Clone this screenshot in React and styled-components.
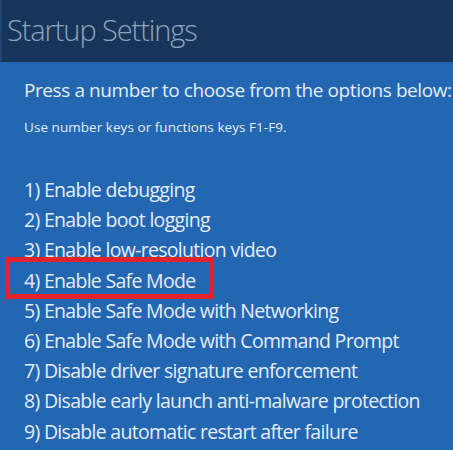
import React from 'react';
import styled, { createGlobalStyle } from 'styled-components';

const GlobalStyle = createGlobalStyle`
    html, body {
        margin: 0;
        padding: 0;
        background: #2366b2;
    }
`

//Screen holds the dark header bar and the blue options panel
const Screen = styled.div`
    width: 453px;
    height: 450px;
    overflow: hidden;
    background: #2366b2;
    font-family: "Open Sans", "Noto Sans", sans-serif;
    color: #e4edf8;
`

const Header = styled.header`
    height: 62px;
    background: #17355b;
    display: flex;
    align-items: center;
    padding-left: 7px;
    box-shadow: inset 2px 0 0 0 #1d4474;
    box-sizing: border-box;
`

const Title = styled.h1`
    margin: 0 0 4px;
    font-size: 29px;
    font-weight: 300;
    color: #8da4ba;
    letter-spacing: -1.1px;
    white-space: nowrap;
`

const Panel = styled.main`
    display: flex;
    flex-direction: column;
    padding: 14px 0 0 24px;
`

const Prompt = styled.p`
    margin: 0;
    font-size: 19px;
    font-weight: 400;
    line-height: 28px;
    letter-spacing: -0.42px;
    white-space: nowrap;
`

const Hint = styled.p`
    margin: 14px 0 0;
    font-size: 13.5px;
    line-height: 18px;
    letter-spacing: 0.05px;
    white-space: nowrap;
`

const OptionList = styled.ol`
    list-style: none;
    margin: 39px 0 0;
    padding: 0;
`

const Option = styled.li`
    position: relative;
    font-size: 19.5px;
    line-height: 30.2px;
    letter-spacing: -0.7px;
    white-space: nowrap;
`

//red frame drawn over the highlighted option
const Highlight = styled.span`
    position: absolute;
    left: -19px;
    top: -9px;
    width: 209px;
    height: 42px;
    border: 5px solid #e3232b;
    box-sizing: border-box;
`

const options = [
    'Enable debugging',
    'Enable boot logging',
    'Enable low-resolution video',
    'Enable Safe Mode',
    'Enable Safe Mode with Networking',
    'Enable Safe Mode with Command Prompt',
    'Disable driver signature enforcement',
    'Disable early launch anti-malware protection',
    'Disable automatic restart after failure',
];

export default function App() {
    return (
        <Screen>
            <GlobalStyle />
            <Header>
                <Title>Startup Settings</Title>
            </Header>
            <Panel>
                <Prompt>Press a number to choose from the options below:</Prompt>
                <Hint>Use number keys or functions keys F1-F9.</Hint>
                <OptionList>
                    {options.map((text, i) => (
                        <Option key={i}>
                            {i + 1}) {text}
                            {i === 3 && <Highlight />}
                        </Option>
                    ))}
                </OptionList>
            </Panel>
        </Screen>
    );
}
